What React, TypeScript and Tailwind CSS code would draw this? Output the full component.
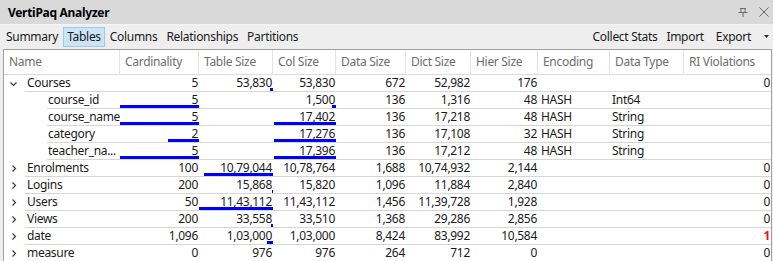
import React from "react";

type R = {
  name: string;
  child?: boolean;
  open?: boolean;
  card: string;
  cardBar?: number;
  table?: string;
  tableBar?: number;
  col: string;
  colBar?: number;
  data: string;
  dict: string;
  hier: string;
  enc?: string;
  type?: string;
  ri?: string;
  riRed?: boolean;
};

const rows: R[] = [
  { name: "Courses", open: true, card: "5", table: "53,830", tableBar: 3, col: "53,830", data: "672", dict: "52,982", hier: "176", ri: "0" },
  { name: "course_id", child: true, card: "5", cardBar: 79, col: "1,500", colBar: 4, data: "136", dict: "1,316", hier: "48", enc: "HASH", type: "Int64" },
  { name: "course_name", child: true, card: "5", cardBar: 79, col: "17,402", colBar: 62, data: "136", dict: "17,218", hier: "48", enc: "HASH", type: "String" },
  { name: "category", child: true, card: "2", cardBar: 31, col: "17,276", colBar: 62, data: "136", dict: "17,108", hier: "32", enc: "HASH", type: "String" },
  { name: "teacher_na...", child: true, card: "5", cardBar: 79, col: "17,396", colBar: 62, data: "136", dict: "17,212", hier: "48", enc: "HASH", type: "String" },
  { name: "Enrolments", card: "100", table: "10,79,044", tableBar: 69, col: "10,78,764", data: "1,688", dict: "10,74,932", hier: "2,144", ri: "0" },
  { name: "Logins", card: "200", table: "15,868", tableBar: 1, col: "15,820", data: "1,096", dict: "11,884", hier: "2,840", ri: "0" },
  { name: "Users", card: "50", table: "11,43,112", tableBar: 74, col: "11,43,112", data: "1,456", dict: "11,39,728", hier: "1,928", ri: "0" },
  { name: "Views", card: "200", table: "33,558", tableBar: 2, col: "33,510", data: "1,368", dict: "29,286", hier: "2,856", ri: "0" },
  { name: "date", card: "1,096", table: "1,03,000", tableBar: 6, col: "1,03,000", data: "8,424", dict: "83,992", hier: "10,584", ri: "1", riRed: true },
  { name: "measure", card: "0", table: "976", col: "976", data: "264", dict: "712", hier: "0", ri: "0" },
];

const headers = ["Name", "Cardinality", "Table Size", "Col Size", "Data Size", "Dict Size", "Hier Size", "Encoding", "Data Type", "RI Violations"];

function Num({ v, bar, red }: { v?: string; bar?: number; red?: boolean }) {
  return (
    <div className="flex h-[16px] flex-col items-end justify-between">
      <span className={`h-[13px] whitespace-nowrap pr-px leading-[16px] ${red ? "font-bold text-[#ff0026]" : ""}`}>{v}</span>
      {bar ? <span className="h-[3px] bg-[#0000ff]" style={{ width: bar }} /> : null}
    </div>
  );
}

function Chevron({ open }: { open?: boolean }) {
  return (
    <svg width="21" height="16" viewBox="0 0 21 16" fill="none" stroke="#3c3c3c" strokeWidth="1.2">
      {open ? <path d="M6.5 7.5 L9.5 10.5 L12.5 7.5" /> : <path d="M8.5 5.5 L11.5 8.5 L8.5 11.5" />}
    </svg>
  );
}

function Row({ r }: { r: R }) {
  const cells = (
    <>
      <div className={`whitespace-nowrap leading-[16px] ${r.child ? "pl-px" : "pl-[2px]"}`}>{r.name}</div>
      <Num v={r.card} bar={r.cardBar} />
      <Num v={r.table} bar={r.tableBar} />
      <Num v={r.col} bar={r.colBar} />
      <Num v={r.data} />
      <Num v={r.dict} />
      <Num v={r.hier} />
      <div className="pl-[3px] leading-[16px]">{r.enc}</div>
      <div className="pl-[2px] leading-[16px]">{r.type}</div>
      <Num v={r.ri} red={r.riRed} />
    </>
  );
  return (
    <div className="flex h-[17px]">
      {r.child ? (
        <div className="w-[43px] shrink-0" />
      ) : (
        <div className="w-[21px] shrink-0">
          <Chevron open={r.open} />
        </div>
      )}
      {r.child ? (
        <div className="grid flex-1 grid-cols-[73px_79px_74px_63px_70px_65px_67px_72px_74px_87px] border-b border-[#d6d6d6]">{cells}</div>
      ) : (
        <div className="grid flex-1 grid-cols-[95px_79px_74px_63px_70px_65px_67px_72px_74px_87px] border-b border-[#d6d6d6]">{cells}</div>
      )}
    </div>
  );
}

function ToolBtn({ label, active }: { label: string; active?: boolean }) {
  return (
    <div
      className={`h-[20px] border px-[3px] leading-[18px] whitespace-nowrap ${
        active ? "border-[#a3c6e6] bg-[#cce4f7]" : "border-transparent"
      }`}
    >
      {label}
    </div>
  );
}

export default function App() {
  return (
    <div className="h-[261px] w-[773px] overflow-hidden bg-[#eeeeee] font-['Noto_Sans','Liberation_Sans',sans-serif] text-[12px] tracking-[-0.3px] text-[#1a1a1a]">
      <div className="flex h-[25px] items-center justify-between border-b border-[#f3f3f3] bg-[#d9d9d9] pl-[8px] pr-[4px] pt-[2px]">
        <span className="font-bold leading-[16px] text-black">VertiPaq Analyzer</span>
        <div className="flex items-center gap-[11px] pb-[2px]">
          <svg width="10" height="9" viewBox="0 0 10 9" fill="none" stroke="#6a6a6a" strokeWidth="1">
            <path d="M2 0.5 H8 M3 0.5 V4 M7 0.5 V4 M0.5 4.5 H9.5 M5 4.5 V9" />
          </svg>
          <svg width="10" height="10" viewBox="0 0 10 10" fill="none" stroke="#6a6a6a" strokeWidth="1">
            <path d="M0.5 0.5 L9.5 9.5 M9.5 0.5 L0.5 9.5" />
          </svg>
        </div>
      </div>

      <div className="flex h-[24px] items-center justify-between pl-[2px] pr-px">
        <div className="flex gap-px">
          <ToolBtn label="Summary" />
          <ToolBtn label="Tables" active />
          <ToolBtn label="Columns" />
          <ToolBtn label="Relationships" />
          <ToolBtn label="Partitions" />
        </div>
        <div className="flex items-center gap-px">
          <ToolBtn label="Collect Stats" />
          <ToolBtn label="Import" />
          <div className="ml-[3px]">
            <ToolBtn label="Export" />
          </div>
          <svg width="14" height="8" viewBox="0 0 14 8" className="ml-[2px]">
            <path d="M6 2 H11 L8.5 5 Z" fill="#2a2a2a" />
          </svg>
        </div>
      </div>

      <div className="ml-[3px] w-[769px] border-l border-r border-t border-[#a0a0a0] bg-white">
        <div className="grid h-[25px] grid-cols-[116px_79px_74px_63px_70px_65px_67px_72px_74px_87px] border-b border-[#dcdcdc] text-[#6d6d6d]">
          {headers.map((h, i) => (
            <div
              key={h}
              className={`flex items-center whitespace-nowrap pl-[5px] leading-[16px] ${i < headers.length - 1 ? "border-r border-[#e3e3e3]" : ""}`}
            >
              {h}
            </div>
          ))}
        </div>
        {rows.map((r) => (
          <Row key={r.name} r={r} />
        ))}
      </div>
    </div>
  );
}
